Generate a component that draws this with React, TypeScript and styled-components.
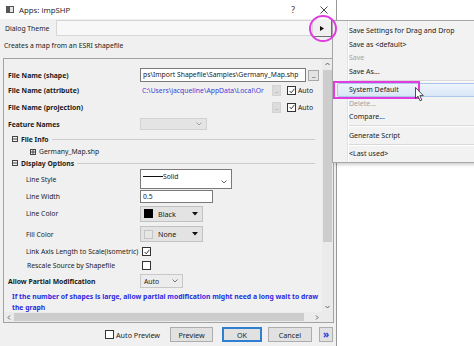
import React from 'react';
import styled, { createGlobalStyle } from 'styled-components';

const GlobalStyle = createGlobalStyle`
  html, body {
    margin: 0;
    padding: 0;
    background: #ffffff;
    overflow: hidden;
  }
  body {
    font-family: "Noto Sans", "Open Sans", sans-serif;
    font-size: 6.8px;
    color: #1b1b1b;
  }
`;

const Screen = styled.div`
  position: relative;
  width: 474px;
  height: 346px;
  overflow: hidden;
`;

const Dialog = styled.div`
  width: 336px;
  height: 346px;
  background: #f0f0f0;
  border-right: 1px solid #979797;
  display: flex;
  flex-direction: column;
`;

const TitleBar = styled.div`
  height: 19px;
  background: #ffffff;
  display: flex;
  align-items: center;
  padding-left: 6px;
  font-size: 7.8px;
`;

const TitleText = styled.span`
  margin-left: 5px;
  flex: 1;
  color: #2a2a2a;
`;

const TitleButton = styled.div<{ $w: number }>`
  width: ${({ $w }) => $w}px;
  height: 19px;
  display: flex;
  align-items: center;
  justify-content: center;
  color: #333;
  font-size: 8.5px;
`;

const ThemeRow = styled.div`
  height: 18px;
  display: flex;
  align-items: center;
  padding-left: 5px;
`;

const ThemeLabel = styled.span`
  width: 51px;
  white-space: nowrap;
`;

const ThemeCombo = styled.div`
  width: 257px;
  height: 16px;
  box-sizing: border-box;
  border: 1px solid #d6d6d6;
  background: #f8f8f8;
`;

const ThemeButton = styled.div`
  width: 19px;
  height: 17px;
  box-sizing: border-box;
  border-right: 1px solid #6f6f6f;
  border-bottom: 1px solid #6f6f6f;
  display: flex;
  align-items: center;
  justify-content: center;
  padding-top: 2px;
`;

const Description = styled.div`
  height: 21px;
  box-sizing: border-box;
  padding: 4px 4px 0;
  line-height: 10px;
  white-space: nowrap;
`;

const Panel = styled.div`
  margin: 0 2px 0 3px;
  height: 265px;
  box-sizing: border-box;
  border: 1px solid #a3a3a3;
  display: grid;
  grid-template-columns: 1fr 11px;
  grid-template-rows: 1fr 10px;
`;

const Content = styled.div`
  overflow: hidden;
  padding: 8px 0 0 4px;
`;

const Row = styled.div<{ $h: number }>`
  height: ${({ $h }) => $h}px;
  display: grid;
  grid-template-columns: 132px 1fr;
  align-items: center;
`;

const Label = styled.span<{ $bold?: boolean; $indent?: number }>`
  padding-left: ${({ $indent }) => $indent || 0}px;
  font-weight: ${({ $bold }) => ($bold ? 700 : 400)};
  white-space: nowrap;
`;

const Controls = styled.div`
  display: flex;
  align-items: center;
`;

const TextBox = styled.div<{ $w: number; $h: number }>`
  width: ${({ $w }) => $w}px;
  height: ${({ $h }) => $h}px;
  box-sizing: border-box;
  border: 1px solid #7a7a7a;
  background: #ffffff;
  padding-left: 2px;
  line-height: ${({ $h }) => $h - 2}px;
  white-space: nowrap;
  overflow: hidden;
`;

const PathText = styled.div`
  width: 132px;
  box-sizing: border-box;
  padding-left: 2px;
  color: #3d3dd4;
  white-space: nowrap;
  overflow: hidden;
`;

const DotsButton = styled.div<{ $w: number; $off?: boolean; $ml?: number }>`
  width: ${({ $w }) => $w}px;
  height: 11px;
  margin-left: ${({ $ml }) => $ml || 0}px;
  box-sizing: border-box;
  border: 1px solid ${({ $off }) => ($off ? '#d3d3d3' : '#a8a8a8')};
  background: ${({ $off }) => ($off ? '#dcdcdc' : '#e3e3e3')};
  color: ${({ $off }) => ($off ? '#a0a0a0' : '#222')};
  font-size: 6px;
  line-height: 11px;
  text-align: center;
  letter-spacing: -0.5px;
`;

const CheckBox = styled.span<{ $ml?: number }>`
  display: inline-flex;
  align-items: center;
  justify-content: center;
  width: 7px;
  height: 7px;
  flex-shrink: 0;
  margin-left: ${({ $ml }) => $ml || 0}px;
  border: 1px solid #333;
  background: #ffffff;
`;

const CheckText = styled.span`
  margin-left: 2px;
  white-space: nowrap;
`;

const Combo = styled.div<{ $w: number; $h: number; $bg: string; $border: string }>`
  width: ${({ $w }) => $w}px;
  height: ${({ $h }) => $h}px;
  box-sizing: border-box;
  border: 1px solid ${({ $border }) => $border};
  background: ${({ $bg }) => $bg};
  display: flex;
  align-items: center;
  justify-content: space-between;
  padding: 0 4px 0 3px;
`;

const StyleCombo = styled.div`
  width: 92px;
  height: 20px;
  box-sizing: border-box;
  border: 1px solid #7a7a7a;
  background: #ffffff;
  display: flex;
  justify-content: space-between;
  padding: 1px 4px 0 2px;
`;

const StyleSample = styled.div`
  display: flex;
  align-items: center;
  height: 10px;
`;

const SampleLine = styled.span`
  width: 20px;
  height: 1px;
  background: #111;
`;

const ChevronBox = styled.div`
  align-self: center;
  padding-top: 4px;
`;

const ColorButton = styled.div`
  width: 63px;
  height: 16px;
  box-sizing: border-box;
  border: 1px solid #c2c2c2;
  background: #e3e3e3;
  display: flex;
  align-items: center;
  padding: 0 4px 0 3px;
  font-size: 7.2px;
`;

const Swatch = styled.span<{ $color: string; $edge: string }>`
  width: 9px;
  height: 9px;
  box-sizing: border-box;
  background: ${({ $color }) => $color};
  border: 1px solid ${({ $edge }) => $edge};
`;

const SwatchName = styled.span`
  flex: 1;
  margin-left: 5px;
`;

const SectionRow = styled.div<{ $h: number; $indent: number }>`
  height: ${({ $h }) => $h}px;
  display: flex;
  align-items: center;
  padding-left: ${({ $indent }) => $indent}px;
`;

const TreeBox = styled.span`
  width: 6px;
  height: 6px;
  box-sizing: border-box;
  border: 1px solid #444;
  margin-right: 3px;
  display: flex;
  align-items: center;
  justify-content: center;
`;

const SectionTitle = styled.span<{ $bold?: boolean }>`
  font-weight: ${({ $bold }) => ($bold ? 700 : 400)};
  white-space: nowrap;
`;

const SectionLine = styled.span`
  flex: 1;
  height: 1px;
  background: #cdcdcd;
  margin: 0 7px 0 3px;
`;

const Note = styled.div`
  padding: 1px 0 0 4px;
  line-height: 11px;
  font-weight: 700;
  color: #2b2be2;
  white-space: nowrap;
`;

const VScroll = styled.div`
  display: flex;
  flex-direction: column;
  background: #ebebeb;
`;

const HScroll = styled.div`
  display: flex;
  background: #ebebeb;
`;

const Corner = styled.div`
  background: #ebebeb;
`;

const Arrow = styled.div<{ $vertical?: boolean }>`
  ${({ $vertical }) => ($vertical ? 'height: 10px;' : 'width: 10px;')}
  display: flex;
  align-items: center;
  justify-content: center;
  flex-shrink: 0;
`;

const Track = styled.div<{ $vertical?: boolean }>`
  flex: 1;
  display: flex;
  flex-direction: ${({ $vertical }) => ($vertical ? 'column' : 'row')};
  padding: ${({ $vertical }) => ($vertical ? '1px 1px 0' : '1px 0 1px')};
`;

const Thumb = styled.div<{ $vertical?: boolean; $size: number }>`
  background: #cdcdcd;
  ${({ $vertical, $size }) => ($vertical ? `height: ${$size}px;` : `width: ${$size}px;`)}
`;

const ButtonBar = styled.div`
  flex: 1;
  display: flex;
  align-items: flex-start;
  padding-top: 4px;
  font-size: 7.2px;
`;

const PreviewCheck = styled.div`
  margin-left: 105px;
  width: 52px;
  height: 15px;
  display: flex;
  align-items: center;
`;

const PushButton = styled.div<{ $w: number; $ml: number; $default?: boolean }>`
  width: ${({ $w }) => $w}px;
  height: 15px;
  margin-left: ${({ $ml }) => $ml}px;
  box-sizing: border-box;
  border: ${({ $default }) => ($default ? '2px solid #2f7fd0' : '1px solid #adadad')};
  background: #e1e1e1;
  display: flex;
  align-items: center;
  justify-content: center;
`;

const MoreGlyph = styled.span`
  color: #2440e0;
  font-weight: 700;
  font-size: 10px;
  line-height: 10px;
  margin-top: -2px;
`;

const Menu = styled.div`
  position: absolute;
  left: 332px;
  top: 20px;
  width: 150px;
  box-sizing: border-box;
  padding: 3px 0 1px;
  border: 1px solid #a8a8a8;
  background-color: #f2f2f2;
  background-image: linear-gradient(to right, transparent 14px, #e3e3e3 14px, #e3e3e3 15px, #ffffff 15px, #ffffff 16px, transparent 16px);
  box-shadow: 2px 2px 3px rgba(0, 0, 0, 0.18);
  font-size: 7px;
`;

const MenuItem = styled.div<{ $disabled?: boolean; $active?: boolean }>`
  height: 13.5px;
  line-height: 13.5px;
  box-sizing: border-box;
  white-space: nowrap;
  color: ${({ $disabled }) => ($disabled ? '#a2a2a2' : '#1b1b1b')};
  padding-left: 16px;
  ${({ $active }) =>
    $active &&
    `
    margin: 0 3px 0 4px;
    padding-left: 11px;
    border: 1px solid #a9c8ea;
    border-radius: 2px;
    line-height: 11.5px;
    background: linear-gradient(#edf4fc, #d8e6f5);
  `}
`;

const MenuSeparator = styled.div`
  height: 5px;
  margin-left: 16px;
  display: flex;
  flex-direction: column;
  justify-content: center;
  &::before {
    content: '';
    height: 1px;
    background: #d9d9d9;
  }
  &::after {
    content: '';
    height: 1px;
    background: #ffffff;
  }
`;

const Highlight = styled.div<{ $round?: boolean }>`
  position: absolute;
  box-sizing: border-box;
  border: 2px solid #e03ce0;
  border-radius: ${({ $round }) => ($round ? '50%' : '0')};
`;

const Cursor = styled.svg`
  position: absolute;
  left: 415px;
  top: 87px;
`;

const Chevron = ({ color = '#333' }: { color?: string }) => (
  <svg width="6" height="4" viewBox="0 0 6 4">
    <polyline points="0.5,0.5 3,3 5.5,0.5" fill="none" stroke={color} strokeWidth="0.9" />
  </svg>
);

const DownTriangle = () => (
  <svg width="6" height="4" viewBox="0 0 6 4">
    <polygon points="0,0 6,0 3,3.5" fill="#111" />
  </svg>
);

const Check = () => (
  <svg width="6" height="6" viewBox="0 0 6 6">
    <polyline points="0.6,3 2.3,4.8 5.4,0.8" fill="none" stroke="#222" strokeWidth="0.9" />
  </svg>
);

const TreeToggle = ({ open }: { open: boolean }) => (
  <TreeBox>
    <svg width="4" height="4" viewBox="0 0 4 4">
      <line x1="0" y1="2" x2="4" y2="2" stroke="#333" strokeWidth="0.9" />
      {!open && <line x1="2" y1="0" x2="2" y2="4" stroke="#333" strokeWidth="0.9" />}
    </svg>
  </TreeBox>
);

const ScrollArrowIcon = ({ dir }: { dir: 'up' | 'down' | 'left' | 'right' }) => {
  const pts = {
    up: '0.5,3 2.5,1 4.5,3',
    down: '0.5,1 2.5,3 4.5,1',
    left: '3,0.5 1,2.5 3,4.5',
    right: '1,0.5 3,2.5 1,4.5',
  }[dir];
  return (
    <svg width="5" height="5" viewBox="0 0 5 5">
      <polyline points={pts} fill="none" stroke="#555" strokeWidth="0.9" />
    </svg>
  );
};

const menuEntries: { text: string; disabled?: boolean; active?: boolean; sep?: boolean }[] = [
  { text: 'Save Settings for Drag and Drop' },
  { text: 'Save as <default>' },
  { text: 'Save', disabled: true },
  { text: 'Save As...' },
  { text: '', sep: true },
  { text: 'System Default', active: true },
  { text: 'Delete...', disabled: true },
  { text: 'Compare...' },
  { text: '', sep: true },
  { text: 'Generate Script' },
  { text: '', sep: true },
  { text: '<Last used>' },
];

const App = () => {
  return (
    <Screen>
      <GlobalStyle />
      <Dialog>
        <TitleBar>
          <svg width="8" height="7" viewBox="0 0 8 7">
            <rect x="0.5" y="0.5" width="7" height="6" fill="#e6e6e6" stroke="#555" />
            <rect x="1" y="1" width="3" height="5" fill="#555" />
          </svg>
          <TitleText>Apps: impSHP</TitleText>
          <TitleButton $w={30}>?</TitleButton>
          <TitleButton $w={4} />
          <TitleButton $w={24}>
            <svg width="8" height="8" viewBox="0 0 8 8">
              <path d="M0.5 0.5 L7.5 7.5 M7.5 0.5 L0.5 7.5" stroke="#333" strokeWidth="0.9" />
            </svg>
          </TitleButton>
        </TitleBar>

        <ThemeRow>
          <ThemeLabel>Dialog Theme</ThemeLabel>
          <ThemeCombo />
          <ThemeButton>
            <svg width="4" height="5" viewBox="0 0 4 5">
              <polygon points="0,0 4,2.5 0,5" fill="#111" />
            </svg>
          </ThemeButton>
        </ThemeRow>

        <Description>Creates a map from an ESRI shapefile</Description>

        <Panel>
          <Content>
            <Row $h={16}>
              <Label $bold>File Name (shape)</Label>
              <Controls>
                <TextBox $w={166} $h={14}>ps\Import Shapefile\Samples\Germany_Map.shp</TextBox>
                <DotsButton $w={11} $ml={2}>...</DotsButton>
              </Controls>
            </Row>
            <Row $h={15}>
              <Label $bold>File Name (attribute)</Label>
              <Controls>
                <PathText>C:\Users\jacqueline\AppData\Local\Or</PathText>
                <DotsButton $w={9} $off>...</DotsButton>
                <CheckBox $ml={6}><Check /></CheckBox>
                <CheckText>Auto</CheckText>
              </Controls>
            </Row>
            <Row $h={18}>
              <Label $bold>File Name (projection)</Label>
              <Controls>
                <DotsButton $w={9} $ml={132} $off>...</DotsButton>
                <CheckBox $ml={6}><Check /></CheckBox>
                <CheckText>Auto</CheckText>
              </Controls>
            </Row>
            <Row $h={16}>
              <Label $bold>Feature Names</Label>
              <Controls>
                <Combo $w={67} $h={12} $bg="#e4e4e4" $border="#d2d2d2">
                  <span />
                  <Chevron color="#9a9a9a" />
                </Combo>
              </Controls>
            </Row>

            <SectionRow $h={14} $indent={4}>
              <TreeToggle open />
              <SectionTitle $bold>File Info</SectionTitle>
              <SectionLine />
            </SectionRow>
            <SectionRow $h={11} $indent={22}>
              <TreeToggle open={false} />
              <SectionTitle>Germany_Map.shp</SectionTitle>
            </SectionRow>
            <SectionRow $h={12} $indent={4}>
              <TreeToggle open />
              <SectionTitle $bold>Display Options</SectionTitle>
              <SectionLine />
            </SectionRow>

            <Row $h={20}>
              <Label $indent={18}>Line Style</Label>
              <Controls>
                <StyleCombo>
                  <StyleSample>
                    <SampleLine />
                    <span>Solid</span>
                  </StyleSample>
                  <ChevronBox><Chevron color="#555" /></ChevronBox>
                </StyleCombo>
              </Controls>
            </Row>
            <Row $h={14}>
              <Label $indent={18}>Line Width</Label>
              <Controls>
                <TextBox $w={73} $h={13}>0.5</TextBox>
              </Controls>
            </Row>
            <Row $h={21}>
              <Label $indent={18}>Line Color</Label>
              <Controls>
                <ColorButton>
                  <Swatch $color="#000000" $edge="#000000" />
                  <SwatchName>Black</SwatchName>
                  <DownTriangle />
                </ColorButton>
              </Controls>
            </Row>
            <Row $h={20}>
              <Label $indent={18}>Fill Color</Label>
              <Controls>
                <ColorButton>
                  <Swatch $color="#e6e6e6" $edge="#c4c4c4" />
                  <SwatchName>None</SwatchName>
                  <DownTriangle />
                </ColorButton>
              </Controls>
            </Row>
            <Row $h={15}>
              <Label $indent={18}>Link Axis Length to Scale(isometric)</Label>
              <Controls>
                <CheckBox $ml={2}><Check /></CheckBox>
              </Controls>
            </Row>
            <Row $h={13}>
              <Label $indent={19}>Rescale Source by Shapefile</Label>
              <Controls>
                <CheckBox $ml={2} />
              </Controls>
            </Row>
            <Row $h={18}>
              <Label $bold>Allow Partial Modification</Label>
              <Controls>
                <Combo $w={43} $h={14} $bg="#ececec" $border="#c8c8c8">
                  <span>Auto</span>
                  <Chevron color="#666" />
                </Combo>
              </Controls>
            </Row>
            <Note>
              If the number of shapes is large, allow partial modification might need a long wait to draw
              <br />
              the graph
            </Note>
          </Content>

          <VScroll>
            <Arrow $vertical><ScrollArrowIcon dir="up" /></Arrow>
            <Track $vertical>
              <Thumb $vertical $size={172} />
            </Track>
            <Arrow $vertical><ScrollArrowIcon dir="down" /></Arrow>
          </VScroll>
          <HScroll>
            <Arrow><ScrollArrowIcon dir="left" /></Arrow>
            <Track>
              <Thumb $size={290} />
            </Track>
            <Arrow><ScrollArrowIcon dir="right" /></Arrow>
          </HScroll>
          <Corner />
        </Panel>

        <ButtonBar>
          <PreviewCheck>
            <CheckBox />
            <CheckText>Auto Preview</CheckText>
          </PreviewCheck>
          <PushButton $w={43} $ml={13}>Preview</PushButton>
          <PushButton $w={40} $ml={9} $default>OK</PushButton>
          <PushButton $w={44} $ml={6}>Cancel</PushButton>
          <PushButton $w={14} $ml={7}><MoreGlyph>»</MoreGlyph></PushButton>
        </ButtonBar>
      </Dialog>

      <Menu>
        {menuEntries.map((entry, index) =>
          entry.sep ? (
            <MenuSeparator key={index} />
          ) : (
            <MenuItem key={index} $disabled={entry.disabled} $active={entry.active}>
              {entry.text}
            </MenuItem>
          ),
        )}
      </Menu>

      <Highlight $round style={{ left: 309, top: 15, width: 28, height: 27 }} />
      <Highlight style={{ left: 333, top: 81, width: 87, height: 18 }} />
      <Cursor width="10" height="15" viewBox="0 0 10 15">
        <path d="M0.5 0.5 L0.5 11.5 L3 9.2 L5 13.8 L6.8 13 L4.9 8.6 L8.3 8.6 Z" fill="#ffffff" stroke="#222" strokeWidth="0.8" />
      </Cursor>
    </Screen>
  );
};

export default App;
